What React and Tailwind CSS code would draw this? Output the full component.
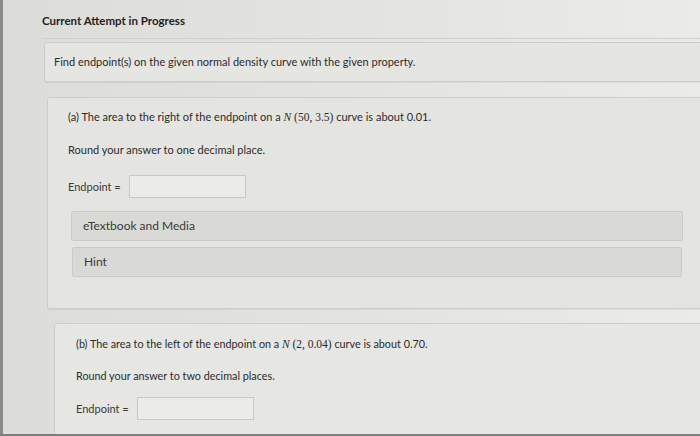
import React from 'react';

const serif = "font-['Liberation_Serif',serif]";

function Endpoint({ className }) {
  return (
    <div className={`flex items-center gap-[8px] ${className}`}>
      <span className="text-[11px] leading-[14px] text-[#3a3a3a]">Endpoint =</span>
      <div className="h-[23px] w-[117px] border border-[#c9c9c6] bg-[#ebebe8]" />
    </div>
  );
}

function Bar({ label, className }) {
  return (
    <div
      className={`flex h-[30px] shrink-0 items-center rounded-[2px] border border-[#cbcbc8] bg-[#d9d9d6] pl-[11px] text-[12px] text-[#3a3a3a] ${className}`}
    >
      {label}
    </div>
  );
}

export default function App() {
  return (
    <div className="relative flex h-[436px] w-[700px] overflow-hidden border-b-2 border-[#7d7d7d] bg-gradient-to-r from-[#dcdcd9] via-[#e3e3e0] to-[#ebebe8] font-['Lato','Liberation_Sans',sans-serif] text-[#2c2c2c]">
      <div className="w-[3px] shrink-0 bg-[#8a8a8a]" />

      <div className="flex min-w-0 flex-1 flex-col pl-[39px] pt-[13px] [&>*]:shrink-0">
        <h1 className="text-[11.5px] font-bold leading-[16px] text-[#1e1e1e]">Current Attempt in Progress</h1>
        <div className="mt-[9px] h-px w-[720px] bg-[#cfcfcc]" />

        {/* intro */}
        <div className="ml-[2px] mt-[3px] flex h-[40px] w-[720px] items-center rounded-[3px] border border-[#cdcdca] bg-[#e5e5e2] pl-[9px] text-[11px] shadow-[0_1px_1px_rgba(0,0,0,0.06)]">
          Find endpoint(s) on the given normal density curve with the given property.
        </div>

        {/* part a */}
        <div className="ml-[5px] mt-[15px] flex w-[680px] flex-col rounded-[3px] border border-[#cdcdca] bg-[#e4e4e1] pb-[31px] pl-[20px] pr-[43px] pt-[12px] shadow-[0_1px_1px_rgba(0,0,0,0.06)]">
          <p className="text-[11px] leading-[14px]">
            (a) The area to the right of the endpoint on a{' '}
            <span className={`${serif} text-[11.5px] italic`}>N</span>{' '}
            <span className={`${serif} text-[11.5px]`}>(50, 3.5)</span> curve is about 0.01.
          </p>
          <p className="mt-[19px] text-[11px] leading-[14px]">Round your answer to one decimal place.</p>
          <Endpoint className="mt-[18px]" />
          <Bar label="eTextbook and Media" className="ml-[3px] mt-[13px]" />
          <Bar label="Hint" className="ml-[4px] mr-[1px] mt-[6px]" />
        </div>

        {/* part b */}
        <div className="ml-[12px] mt-[14px] flex w-[680px] flex-col rounded-[3px] border border-[#cdcdca] bg-[#e6e6e3] pb-[20px] pl-[21px] pt-[13px] shadow-[0_1px_1px_rgba(0,0,0,0.06)]">
          <p className="text-[10.8px] leading-[14px]">
            (b) The area to the left of the endpoint on a{' '}
            <span className={`${serif} text-[11.5px] italic`}>N</span>{' '}
            <span className={`${serif} text-[11.5px]`}>(2, 0.04)</span> curve is about 0.70.
          </p>
          <p className="mt-[18px] text-[10.8px] leading-[14px]">Round your answer to two decimal places.</p>
          <Endpoint className="mt-[14px]" />
        </div>
      </div>
    </div>
  );
}
